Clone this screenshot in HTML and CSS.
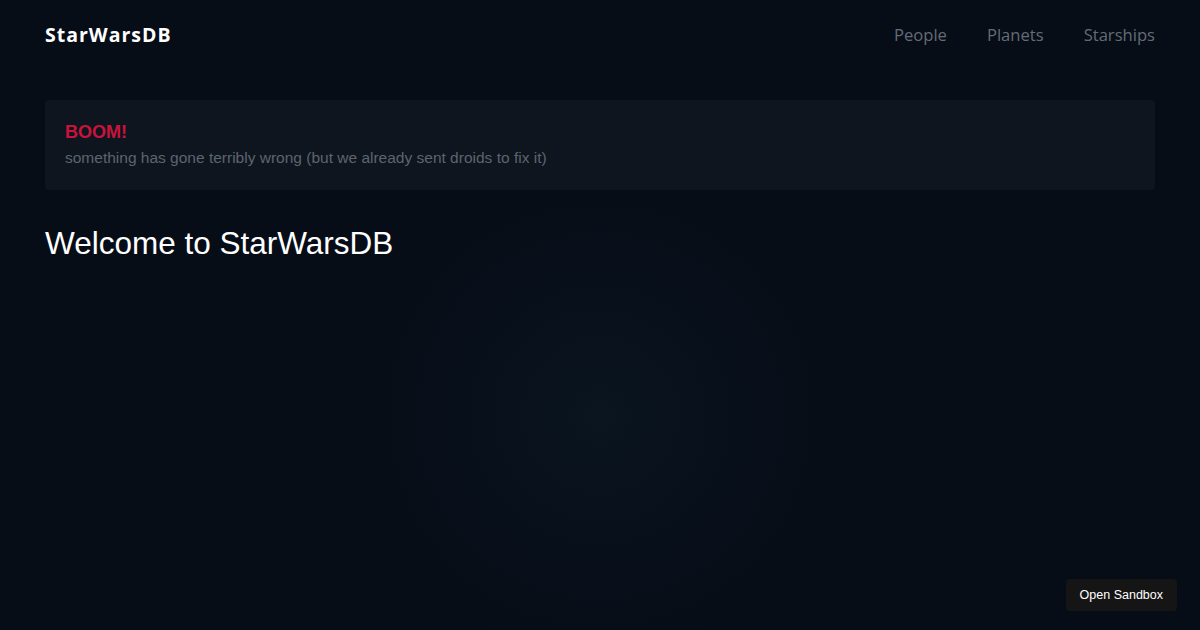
FILE: index.html
```html
<!DOCTYPE html>
<html lang="en">
  <head>
    <meta charset="UTF-8" />
    <meta name="viewport" content="width=device-width, initial-scale=1.0" />
    <title>StarWarsDB</title>
    <link rel="stylesheet" href="styles.css">
  </head>
  <body>
    <nav class="navbar">
      <a href="" class="logo">StarWarsDB</a>
      <div class="links">
        <a href="">People</a>
        <a href="">Planets</a>
        <a href="">Starships</a>
      </div>
    </nav>

    <main class="container">
      <div class="alert">
        <h4>BOOM!</h4>
        <p>something has gone terribly wrong (but we already sent droids to fix it)</p>
      </div>
      <h1 class="welcome">Welcome to StarWarsDB</h1>
    </main>

    <a href="" class="sandbox">Open Sandbox</a>
  </body>
</html>
```

FILE: styles.css
```css
* {
  box-sizing: border-box;
}
html,
body {
  height: 100%;
}
body {
  margin: 0;
  font-family: "Liberation Sans", Arial, sans-serif;
  color: #fff;
  background-color: #060d17;
  background-image: radial-gradient(
    circle at 50% 66%,
    #0a1520 0,
    #08101b 110px,
    #060d17 240px
  );
}
.navbar {
  display: flex;
  justify-content: space-between;
  align-items: center;
  padding: 0 45px;
  height: 69px;
  font-family: "Open Sans", sans-serif;
}
.logo {
  color: #fff;
  font-weight: 700;
  font-size: 19.5px;
  letter-spacing: 1px;
  text-decoration: none;
}
.links {
  display: flex;
  column-gap: 40px;
}
.links a {
  color: #656b75;
  font-size: 16.6px;
  text-decoration: none;
}
.container {
  padding: 31px 45px 0;
}
.alert {
  background-color: #0e151f;
  border-radius: 4px;
  padding: 22px 20px 23px;
}
.alert h4 {
  margin: 0 0 6px;
  color: #c8143c;
  font-size: 18px;
  font-weight: 700;
}
.alert p {
  margin: 0;
  color: #5d646e;
  font-size: 15.5px;
}
.welcome {
  margin: 35px 0 0;
  font-size: 31.5px;
  font-weight: 400;
}
.sandbox {
  position: fixed;
  right: 23px;
  bottom: 19px;
  padding: 9px 14px;
  background-color: #151515;
  border-radius: 4px;
  color: #fff;
  font-size: 12.5px;
  text-decoration: none;
}
```
